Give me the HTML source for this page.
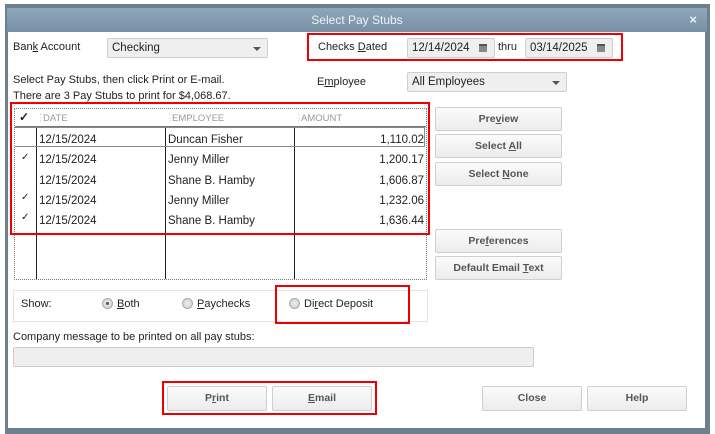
<!DOCTYPE html>
<html><head><style>
*{box-sizing:border-box;margin:0;padding:0}
body{width:715px;height:434px;background:#fff;position:relative;overflow:hidden;font-family:"Liberation Sans",sans-serif;font-size:11px;color:#222}
.a{position:absolute}
.frame{left:5px;top:4px;width:705px;height:430px;background:#6e7f8d}
.title{left:7px;top:8px;width:700px;height:24px;background:linear-gradient(#8fa6ba,#7890a6);color:#eef2f6;font-size:12px;text-align:center;line-height:24px}
.content{left:8px;top:32px;width:697px;height:396px;background:#fff}
.combo{background:#efefef;border:1px solid #cfcfcf;border-radius:2px;height:20px;line-height:18px;padding-left:4px;font-size:11.5px}
.dd{position:absolute;right:6px;top:8px;width:0;height:0;border-left:4px solid transparent;border-right:4px solid transparent;border-top:4px solid #555}
.cal{position:absolute;right:7px;top:5px;width:8px;height:8px;background:#888;border-top:2px solid #555}
.red{border:2px solid #e00}
.btn{background:linear-gradient(#fbfbfb,#ececec);border:1px solid #cfcfcf;border-radius:2px;text-align:center;font-weight:bold;color:#555;font-size:10.5px}
.hd{color:#999;font-size:9.5px;top:113px}
.radio{width:11px;height:11px;border-radius:50%;border:1px solid #aaa;background:radial-gradient(#eee,#ccc)}
.t{font-size:11.5px}
u{text-decoration:underline}
</style></head><body>
<div class="a frame"></div>
<div class="a title">Select Pay Stubs<span style="position:absolute;right:10px;font-weight:bold;font-size:13px">×</span></div>
<div class="a content"></div>

<div class="a" style="left:13px;top:41px">Ban<u>k</u> Account</div>
<div class="a combo" style="left:107px;top:38px;width:161px">Checking<div class="dd"></div></div>

<div class="a red" style="left:307px;top:33px;width:316px;height:28px"></div>
<div class="a" style="left:318px;top:41px">Checks <u>D</u>ated</div>
<div class="a combo" style="left:407px;top:38px;width:88px">12/14/2024<div class="cal"></div></div>
<div class="a" style="left:498px;top:41px">thru</div>
<div class="a combo" style="left:525px;top:38px;width:88px">03/14/2025<div class="cal"></div></div>

<div class="a" style="left:13px;top:74px">Select Pay Stubs, then click Print or E-mail.</div>
<div class="a" style="left:13px;top:90px">There are 3 Pay Stubs to print for $4,068.67.</div>
<div class="a" style="left:317px;top:76px">E<u>m</u>ployee</div>
<div class="a combo" style="left:407px;top:72px;width:160px">All Employees<div class="dd"></div></div>

<div class="a" style="left:14px;top:108px;width:413px;height:172px;border:1px dotted #777"></div>
<div class="a" style="left:15px;top:126px;width:411px;height:1px;background:#777"></div>
<div class="a" style="left:36px;top:127px;width:1px;height:152px;background:#222"></div>
<div class="a" style="left:165px;top:127px;width:1px;height:152px;background:#222"></div>
<div class="a" style="left:294px;top:127px;width:1px;height:152px;background:#222"></div>
<div class="a" style="left:15px;top:127px;width:410px;height:20px;border:1px solid #888;border-left:none"></div>
<div class="a" style="left:19px;top:110px;font-weight:bold;font-size:12px">✓</div>
<div class="a hd" style="left:36px;color:#bbb">⋮</div><div class="a hd" style="left:43px">DATE</div>
<div class="a hd" style="left:165px;color:#bbb">⋮</div><div class="a hd" style="left:172px">EMPLOYEE</div>
<div class="a hd" style="left:294px;color:#bbb">⋮</div><div class="a hd" style="left:301px">AMOUNT</div>

<div class="a t" style="left:39px;top:134px">12/15/2024</div><div class="a t" style="left:168px;top:134px">Duncan Fisher</div><div class="a t" style="right:291px;top:134px">1,110.02</div>
<div class="a" style="left:21px;top:152px;font-size:10px">✓</div><div class="a t" style="left:39px;top:154px">12/15/2024</div><div class="a t" style="left:168px;top:154px">Jenny Miller</div><div class="a t" style="right:291px;top:154px">1,200.17</div>
<div class="a t" style="left:39px;top:175px">12/15/2024</div><div class="a t" style="left:168px;top:175px">Shane B. Hamby</div><div class="a t" style="right:291px;top:175px">1,606.87</div>
<div class="a" style="left:21px;top:192px;font-size:10px">✓</div><div class="a t" style="left:39px;top:195px">12/15/2024</div><div class="a t" style="left:168px;top:195px">Jenny Miller</div><div class="a t" style="right:291px;top:195px">1,232.06</div>
<div class="a" style="left:21px;top:212px;font-size:10px">✓</div><div class="a t" style="left:39px;top:215px">12/15/2024</div><div class="a t" style="left:168px;top:215px">Shane B. Hamby</div><div class="a t" style="right:291px;top:215px">1,636.44</div>
<div class="a red" style="left:10px;top:102px;width:420px;height:133px"></div>

<div class="a btn" style="left:435px;top:107px;width:127px;height:24px;line-height:22px">Pre<u>v</u>iew</div>
<div class="a btn" style="left:435px;top:134px;width:127px;height:24px;line-height:22px">Select <u>A</u>ll</div>
<div class="a btn" style="left:435px;top:162px;width:127px;height:24px;line-height:22px">Select <u>N</u>one</div>
<div class="a btn" style="left:435px;top:229px;width:127px;height:24px;line-height:22px">Pre<u>f</u>erences</div>
<div class="a btn" style="left:435px;top:256px;width:127px;height:24px;line-height:22px">Default Email <u>T</u>ext</div>

<div class="a" style="left:13px;top:290px;width:415px;height:32px;border:1px solid #e4e4e4"></div>
<div class="a" style="left:21px;top:298px">Show:</div>
<div class="a radio" style="left:102px;top:298px"><div style="position:absolute;left:3px;top:3px;width:3px;height:3px;background:#555;border-radius:50%"></div></div>
<div class="a" style="left:117px;top:298px"><u>B</u>oth</div>
<div class="a radio" style="left:182px;top:298px"></div>
<div class="a" style="left:197px;top:298px"><u>P</u>aychecks</div>
<div class="a radio" style="left:289px;top:298px"></div>
<div class="a" style="left:304px;top:298px">Di<u>r</u>ect Deposit</div>
<div class="a red" style="left:275px;top:285px;width:135px;height:39px"></div>

<div class="a" style="left:13px;top:331px">Company message to be printed on all pay stubs:</div>
<div class="a" style="left:13px;top:347px;width:521px;height:20px;background:#efefef;border:1px solid #ccc;border-radius:2px"></div>

<div class="a red" style="left:162px;top:381px;width:215px;height:34px"></div>
<div class="a btn" style="left:167px;top:386px;width:100px;height:25px;line-height:23px">P<u>r</u>int</div>
<div class="a btn" style="left:272px;top:386px;width:100px;height:25px;line-height:23px"><u>E</u>mail</div>
<div class="a btn" style="left:482px;top:386px;width:100px;height:25px;line-height:23px">Close</div>
<div class="a btn" style="left:587px;top:386px;width:100px;height:25px;line-height:23px">Help</div>
</body></html>
